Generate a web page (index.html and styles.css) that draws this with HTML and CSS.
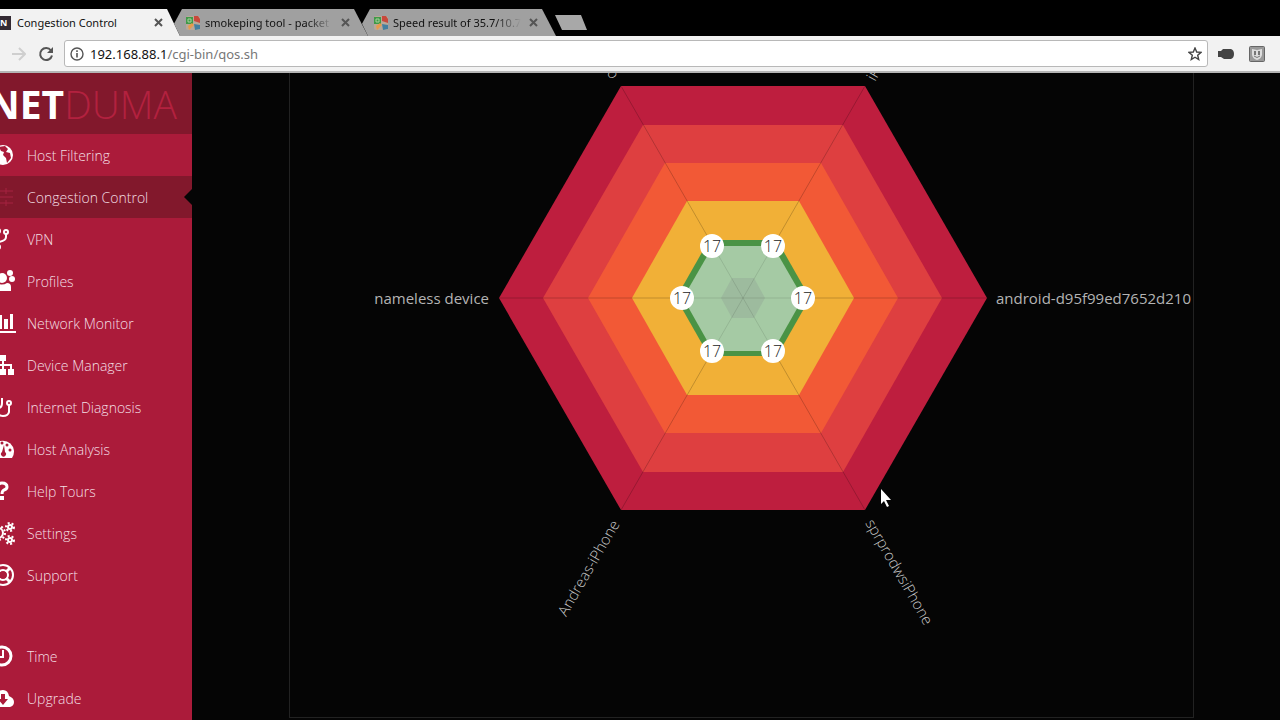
FILE: index.html
```
<!DOCTYPE html>
<html lang="en">
<head>
    <meta charset="UTF-8">
    <meta name="viewport" content="width=device-width, initial-scale=1.0">
    <title>Congestion Control</title>
    <link rel="stylesheet" href="styles.css">
</head>
<body>

    <!-- Browser bar -->
    <header class="browser">
        <div class="tabs">
            <div class="tab tab_active">
                <span class="fav_n">N</span>
                <span class="tab_title">Congestion Control</span>
                <button class="tab_close" aria-label="Close tab"><svg width="9" height="9" viewBox="0 0 9 9"><path d="M1 1l7 7M8 1L1 8"/></svg></button>
            </div>
            <div class="tab">
                <svg class="fav" width="14" height="14" viewBox="0 0 14 14"><rect width="14" height="14" rx="2" fill="#b9a898"/><path d="M0 1h7v7H0z" fill="#3f9a48"/><path d="M8 0h4l2 3v4L8 5z" fill="#c8493c"/><path d="M2 10l4-3 2 2-5 5z" fill="#e79a4c"/><path d="M8 8l6 1v4l-5 1z" fill="#447fa0"/><path d="M2 3h3v3H2z" fill="none" stroke="#a9cf9c"/></svg>
                <span class="tab_title fade">smokeping tool - packet</span>
                <button class="tab_close" aria-label="Close tab"><svg width="9" height="9" viewBox="0 0 9 9"><path d="M1 1l7 7M8 1L1 8"/></svg></button>
            </div>
            <div class="tab">
                <svg class="fav" width="14" height="14" viewBox="0 0 14 14"><rect width="14" height="14" rx="2" fill="#b9a898"/><path d="M0 1h7v7H0z" fill="#3f9a48"/><path d="M8 0h4l2 3v4L8 5z" fill="#c8493c"/><path d="M2 10l4-3 2 2-5 5z" fill="#e79a4c"/><path d="M8 8l6 1v4l-5 1z" fill="#447fa0"/><path d="M2 3h3v3H2z" fill="none" stroke="#a9cf9c"/></svg>
                <span class="tab_title fade">Speed result of 35.7/10.76</span>
                <button class="tab_close" aria-label="Close tab"><svg width="9" height="9" viewBox="0 0 9 9"><path d="M1 1l7 7M8 1L1 8"/></svg></button>
            </div>
            <button class="new_tab" aria-label="New tab"></button>
        </div>
        <div class="toolbar">
            <button class="tool" aria-label="Forward"><svg width="14" height="14" viewBox="0 0 14 14" fill="none" stroke="#cfcfcf" stroke-width="2"><path d="M0 7h12M7 1l6 6-6 6"/></svg></button>
            <button class="tool" aria-label="Reload"><svg width="16" height="16" viewBox="0 0 16 16"><path d="M13 4.500A6 6 0 1 0 14 9.500" fill="none" stroke="#555" stroke-width="2"/><path d="M15 1v6H9z" fill="#555"/></svg></button>
            <div class="address">
                <svg width="14" height="14" viewBox="0 0 14 14"><circle cx="7" cy="7" r="6" fill="none" stroke="#555" stroke-width="1.400"/><path d="M6.200 6h1.600v4.500H6.200zM6.200 3.300h1.600v1.600H6.200z" fill="#555"/></svg>
                <a class="url" href="#"><b>192.168.88.1</b>/cgi-bin/qos.sh</a>
                <svg width="14" height="14" viewBox="0 0 14 14"><path d="M7 1l1.700 4 4.300.400-3.300 2.800 1 4.300L7 10.200l-3.700 2.300 1-4.300L1 5.400 5.300 5z" fill="none" stroke="#444" stroke-width="1.400"/></svg>
            </div>
            <button class="tool" aria-label="Camera extension"><svg width="16" height="12" viewBox="0 0 16 12"><path d="M0 3h3l2-2h8q3 1 3 5t-3 5H6L3 9H0z" fill="#444"/></svg></button>
            <button class="tool tool_last" aria-label="Mask extension"><svg width="16" height="16" viewBox="0 0 16 16"><rect x=".5" y=".5" width="15" height="15" rx="1" fill="#999" stroke="#666"/><path d="M3 3l5 1 5-1v6q-1 4-5 5-4-1-5-5z" fill="#ddd"/><path d="M6 5v4M10 5v4" stroke="#555" stroke-width="1.500"/><path d="M5 10q3 3 6 0" fill="none" stroke="#777"/></svg></button>
        </div>
    </header>

    <div class="page">
        <nav class="sidebar">
            <div class="logo"><b>NET</b>DUMA</div>
            <a href="#"><svg viewBox="0 0 22 22"><circle cx="11" cy="11" r="10"/><path class="cut" d="M7 3l6-1 3 3-2 3 4 1 1 5-4 5-1-5-3-3 1-3-3-1z"/></svg>Host Filtering</a>
            <a href="#" class="selected"><svg viewBox="0 0 22 22"><path class="line dim" d="M0 5h21M0 11h21M0 17h21M14 2v6M7 8v6M14 14v6"/></svg>Congestion Control</a>
            <a href="#"><svg viewBox="0 0 22 22"><g class="line"><circle cx="6" cy="3" r="2"/><circle cx="14" cy="4" r="2"/><circle cx="6" cy="19" r="2"/><path d="M6 5v12M14 6v3q0 4-8 5"/></g></svg>VPN</a>
            <a href="#"><svg viewBox="0 0 22 22"><circle cx="10" cy="8" r="5"/><circle cx="18" cy="3" r="3"/><circle cx="20" cy="9" r="3"/><path d="M1 21v-5q1-3 4-3 5 3 10 0 4 0 4 4v4z"/></svg>Profiles</a>
            <a href="#"><svg viewBox="0 0 22 22"><path d="M0 19h24v2H0zM2 10h3v7H2zM6 3h4v14H6zM12 7h4v10h-4zM18 2h3v15h-3z"/></svg>Network Monitor</a>
            <a href="#"><svg viewBox="0 0 22 22"><path d="M7 1h7v6H7zM0 15h6v6H0zM8 15h6v6H8zM16 15h6v6h-6z"/><path class="line" d="M11 6v9M3 15v-4h16v4"/></svg>Device Manager</a>
            <a href="#"><svg viewBox="0 0 22 22"><g class="line"><path d="M2 2v5q0 5 4 5t4-5V2M6 12v4q0 4 5 4t6-4V9"/><circle cx="17" cy="7" r="2"/></g></svg>Internet Diagnosis</a>
            <a href="#"><svg viewBox="0 0 22 22"><path d="M2 20a11 11 0 1 1 18 0z"/><g class="cut"><circle cx="5" cy="9" r="1.500"/><circle cx="10" cy="5" r="1.500"/><circle cx="15" cy="7" r="1.500"/><circle cx="18" cy="12" r="1.500"/><path d="M12 7l1 7a2.500 2.500 0 1 1-3 0z"/></g></svg>Host Analysis</a>
            <a href="#"><svg viewBox="0 0 22 22"><path class="thick" d="M6 7q0-4 4-4 5 0 5 4 0 2-3 3-2 1-2 4"/><path d="M8 16h4v4H8z"/></svg>Help Tours</a>
            <a href="#"><svg viewBox="0 0 22 22"><g class="gear"><circle cx="6" cy="11" r="5"/><circle cx="18" cy="5" r="2"/><circle cx="18" cy="18" r="2"/></g><g class="teeth"><circle cx="6" cy="11" r="7"/><circle cx="18" cy="5" r="4"/><circle cx="18" cy="18" r="4"/></g></svg>Settings</a>
            <a href="#"><svg viewBox="0 0 22 22"><circle class="line" cx="11" cy="11" r="10"/><circle class="line" cx="11" cy="11" r="5"/><path class="thick" d="M4 4l4 4M18 4l-4 4M4 18l4-4M18 18l-4-4"/></svg>Support</a>
            <a href="#" class="spaced"><svg viewBox="0 0 22 22"><circle class="thick" cx="10" cy="11" r="9"/><path class="line" d="M11 5v7H6"/></svg>Time</a>
            <a href="#"><svg viewBox="0 0 22 22"><path d="M5 20q-5 0-5-5 0-4 4-5 1-7 7-7 5 0 6 6 5 2 5 6t-4 5z"/><path class="cut" d="M9 7h4v5h3l-5 6-5-6h3z"/></svg>Upgrade</a>
        </nav>

        <main class="content">
            <section class="panel">
                <!-- Chart origin is the middle of the hexagon -->
                <svg class="chart" viewBox="-453 -226 903 644">
                    <polygon fill="#be1e3e" points="244,-1 122,211 -122,211 -244,-1 -122,-213 122,-213"/>
                    <polygon fill="#de3f40" points="199,-1 100,173 -100,173 -200,-1 -100,-174 100,-174"/>
                    <polygon fill="#f25936" points="155,-1 78,134 -78,134 -155,-1 -78,-136 78,-136"/>
                    <polygon fill="#f1b037" points="111,-1 56,96 -56,96 -111,-1 -56,-98 56,-98"/>
                    <path class="axis" d="M-244 -1H244M-122 -213L122 211M122 -213L-122 211"/>
                    <polygon fill="#4a9345" points="67,-1 34,57 -34,57 -67,-1 -34,-59 34,-59"/>
                    <polygon fill="#a5caa4" points="60,-1 30,52 -30,52 -60,-1 -30,-53 30,-53"/>
                    <polygon fill="#9dbb9e" points="22,-1 11,19 -11,19 -22,-1 -11,-21 11,-21"/>
                    <path class="axis axis_faint" d="M-60 -1H60M-30 -53L30 51M30 -53L-30 51"/>
                    <g class="points">
                        <circle cx="60" cy="-1" r="12"/><text x="60" y="5">17</text>
                        <circle cx="30" cy="52" r="12"/><text x="30" y="58">17</text>
                        <circle cx="-31" cy="52" r="12"/><text x="-31" y="58">17</text>
                        <circle cx="-61" cy="-1" r="12"/><text x="-61" y="5">17</text>
                        <circle cx="-31" cy="-53" r="12"/><text x="-31" y="-47">17</text>
                        <circle cx="30" cy="-53" r="12"/><text x="30" y="-47">17</text>
                    </g>
                    <g class="labels">
                        <text class="level" x="253" y="5">android-d95f99ed7652d210</text>
                        <text class="level end" x="-254" y="5">nameless device</text>
                        <text class="end" transform="translate(-123 225) rotate(-60)">Andreas-iPhone</text>
                        <text transform="translate(122 224) rotate(60)">sprprodwsiPhone</text>
                        <text class="end" transform="translate(-132 -219) rotate(60)">Echo</text>
                        <text transform="translate(132 -217) rotate(-60)">iPhone</text>
                    </g>
                </svg>
            </section>
        </main>
    </div>

    <svg class="cursor" width="12" height="20" viewBox="0 0 12 20"><path d="M1 1v15l3-3 3 6 2-1-3-6h5z" fill="#fff"/></svg>

</body>
</html>
```

FILE: styles.css
```
* {
    box-sizing: border-box;
}
body {
    margin: 0;
    height: 100vh;
    display: flex;
    flex-direction: column;
    overflow: hidden;
    background-color: #050505;
    font-family: "Open Sans", sans-serif;
}
button {
    border: none;
    padding: 0;
    background: none;
    display: flex;
}
a {
    text-decoration: none;
}

/* browser */
.browser {
    position: relative;
    z-index: 1;
    font-family: "Noto Sans", sans-serif;
}
.tabs {
    display: flex;
    height: 36px;
    padding-top: 9px;
    background-color: #000;
}
.tab {
    display: flex;
    align-items: center;
    width: 194px;
    margin-right: -6px;
    padding: 0 18px 0 12px;
    background-color: #a0a0a0;
    clip-path: polygon(8px 0, 180px 0, 100% 100%, 6px 100%, 0 55%);
    font-size: 11px;
    color: #111;
}
.tab_active {
    width: 180px;
    padding: 0 17px 0 0;
    background-color: #f2f2f2;
    clip-path: polygon(0 0, 167px 0, 100% 100%, 0 100%);
}
.fav_n {
    width: 11px;
    margin-right: 6px;
    background-color: #332a33;
    color: #fff;
    font-size: 9px;
    font-weight: bold;
    line-height: 14px;
}
.fav {
    margin-right: 5px;
}
.tab_title {
    flex: 1;
    overflow: hidden;
    white-space: nowrap;
}
.fade {
    margin-right: 8px;
    -webkit-mask-image: linear-gradient(to right, #000 80%, transparent);
    mask-image: linear-gradient(to right, #000 80%, transparent);
}
.tab_close path {
    stroke: #555;
    stroke-width: 2;
}
.new_tab {
    width: 32px;
    height: 15px;
    margin: 6px 0 0 5px;
    background-color: #a8a8a8;
    clip-path: polygon(0 0, 26px 0, 100% 100%, 7px 100%);
}
.toolbar {
    display: flex;
    align-items: center;
    gap: 10px;
    height: 37px;
    padding: 0 15px 0 12px;
    background-color: #f2f2f2;
    border-bottom: 2px solid #b5b5b5;
}
.tool {
    justify-content: center;
}
.tool:nth-child(2) {
    margin-left: 2px;
}
.tool_last {
    margin-left: 5px;
}
.address {
    flex: 1;
    display: flex;
    align-items: center;
    gap: 6px;
    height: 27px;
    padding: 0 5px;
    background-color: #fff;
    border: 1px solid #b8b8b8;
    border-radius: 3px;
}
.url {
    flex: 1;
    font-size: 13px;
    color: #777;
}
.url b {
    font-weight: normal;
    color: #111;
}

/* page */
.page {
    flex: 1;
    display: flex;
    min-height: 0;
}
.sidebar {
    width: 192px;
    flex-shrink: 0;
    background-color: #ab1b3a;
}
.logo {
    height: 61px;
    margin-left: -17px;
    padding-left: 5px;
    background-color: #82182c;
    color: #b3213f;
    font-size: 39px;
    font-weight: 300;
    line-height: 61px;
    white-space: nowrap;
}
.logo b {
    color: #fff;
    font-weight: 700;
}
.sidebar a {
    position: relative;
    display: flex;
    align-items: center;
    gap: 13px;
    height: 42px;
    margin-left: -8px;
    color: #f3dfe3;
    font-size: 14px;
    font-weight: 300;
}
.sidebar svg {
    width: 22px;
    height: 22px;
    fill: #fff;
    overflow: visible;
}
.sidebar .selected {
    background-color: #82182c;
}
.selected::after {
    content: "";
    position: absolute;
    right: 0;
    border: 8px solid transparent;
    border-left: none;
    border-right-color: #050505;
}
.sidebar .spaced {
    margin-top: 39px;
}
.sidebar .cut {
    fill: #ab1b3a;
}
.line,
.thick,
.gear,
.teeth {
    fill: none;
    stroke: #fff;
    stroke-width: 2;
}
.thick {
    stroke-width: 3;
}
.teeth {
    stroke-dasharray: 2 2;
}
.dim {
    stroke: #a52340;
    stroke-width: 1;
}
.content {
    flex: 1;
    padding: 0 86px 0 97px;
}
.panel {
    border: 1px solid #222;
    border-top: none;
}
.chart {
    display: block;
    width: 100%;
    overflow: visible;
}
.axis {
    stroke: #000;
    stroke-opacity: 0.2;
}
.axis_faint {
    stroke-opacity: 0.1;
}
.points {
    fill: #fff;
    font-size: 16px;
    font-weight: 300;
    text-anchor: middle;
}
.points text {
    fill: #222;
}
.labels {
    fill: #c8c8c8;
    font-size: 15px;
    font-weight: 300;
}
.level {
    font-weight: 400;
    fill: #b4b4b4;
}
.end {
    text-anchor: end;
}
.cursor {
    position: absolute;
    left: 880px;
    top: 488px;
    z-index: 2;
}
```
